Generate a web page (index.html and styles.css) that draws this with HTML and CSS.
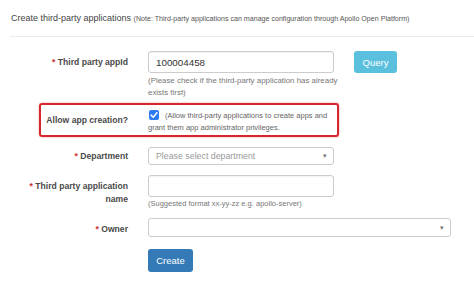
FILE: index.html
```html
<!DOCTYPE html>
<html>

<head>
    <meta charset="UTF-8">
    <title>Create third-party applications</title>
    <link rel="stylesheet" href="styles.css">
</head>

<body>
    <div class="panel">
        <div class="panel-header">
            Create third-party applications
            <small>(Note: Third-party applications can manage configuration through Apollo Open Platform)</small>
        </div>

        <form class="form">
            <div class="form-row row-appid">
                <label class="control-label"><span class="req">*</span> Third party appId</label>
                <div class="controls">
                    <div class="inline">
                        <input type="text" class="form-control" value="100004458">
                        <button type="button" class="btn btn-info">Query</button>
                    </div>
                    <div class="help">(Please check if the third-party application has already exists first)</div>
                </div>
            </div>

            <div class="form-row row-allow">
                <label class="control-label">Allow app creation?</label>
                <div class="controls">
                    <div class="check-text">
                        <span class="checkbox">
                            <svg width="10" height="10" viewBox="0 0 10 10">
                                <path d="M2.2 5.2 L4.2 7.2 L7.9 2.8" fill="none" stroke="#fff" stroke-width="1.6" stroke-linecap="round" stroke-linejoin="round"/>
                            </svg>
                        </span>(Allow third-party applications to create apps and grant them app administrator privileges.
                    </div>
                </div>
            </div>

            <div class="form-row row-dept">
                <label class="control-label"><span class="req">*</span> Department</label>
                <div class="controls">
                    <div class="select select-short">
                        <span class="placeholder">Please select department</span>
                        <span class="caret">&#9662;</span>
                    </div>
                </div>
            </div>

            <div class="form-row row-name">
                <label class="control-label"><span class="req">*</span> Third party application name</label>
                <div class="controls">
                    <input type="text" class="form-control">
                    <div class="help">(Suggested format xx-yy-zz e.g. apollo-server)</div>
                </div>
            </div>

            <div class="form-row row-owner">
                <label class="control-label"><span class="req">*</span> Owner</label>
                <div class="controls">
                    <div class="select select-long">
                        <span class="placeholder"></span>
                        <span class="caret">&#9662;</span>
                    </div>
                </div>
            </div>

            <div class="form-row row-submit">
                <div></div>
                <div class="controls">
                    <button type="button" class="btn btn-primary">Create</button>
                </div>
            </div>
        </form>
    </div>
</body>

</html>
```

FILE: styles.css
```css
/* Create third-party application form */
body {
    font-family: "Liberation Sans", Arial, sans-serif;
    margin: 0;
    padding: 0;
    background-color: #fff;
    color: #333;
}

.panel-header {
    margin-left: 10px;
    padding: 12px 0 11px 1px;
    font-size: 9px;
    line-height: 12px;
    color: #444;
    border-bottom: 1px solid #eaeaea;
    white-space: nowrap;
}

.panel-header small {
    font-size: 7.1px;
    color: #555;
}

.form {
    padding-top: 14px;
}

.form-row {
    display: grid;
    grid-template-columns: 108px 1fr;
    column-gap: 20px;
    padding-left: 20px;
    align-items: start;
}

.control-label {
    text-align: right;
    font-weight: bold;
    font-size: 8.6px;
    color: #4a4a4a;
}

.req {
    color: #c9302c;
}

.form-control {
    display: block;
    box-sizing: border-box;
    width: 186px;
    height: 22px;
    margin: 0;
    padding: 0 7px;
    border: 1px solid #ccc;
    border-radius: 3px;
    font-family: inherit;
    font-size: 9.8px;
    color: #333;
    box-shadow: inset 0 1px 1px rgba(0, 0, 0, 0.05);
}

.inline {
    display: flex;
    align-items: center;
}

.btn {
    border: none;
    border-radius: 3px;
    color: #fff;
    font-family: inherit;
    font-size: 9.5px;
    cursor: pointer;
}

.btn-info {
    background-color: #5bc0de;
    height: 22px;
    width: 43px;
    margin-left: 20px;
    padding: 0;
}

.btn-primary {
    background-color: #337ab7;
    height: 23px;
    width: 45px;
    padding: 0;
}

.help {
    width: 186px;
    font-size: 7.5px;
    line-height: 12px;
    color: #777;
}

/* appid row */
.row-appid .control-label {
    line-height: 22px;
}

.row-appid .help {
    width: 196px;
    margin-top: 2px;
    font-size: 7.9px;
}

/* allow row, marked with a red frame */
.row-allow {
    margin-top: 4px;
    margin-left: 39px;
    width: 300px;
    box-sizing: border-box;
    grid-template-columns: 87px 1fr;
    padding: 5px 0 1px 0;
    border: 2px solid #d9262e;
    border-radius: 3px;
    box-shadow: 0 0 2px rgba(200, 20, 30, 0.45);
}

.row-allow .control-label {
    line-height: 20px;
}

.check-text {
    width: 186px;
    font-size: 7.5px;
    line-height: 12px;
    color: #666;
}

.checkbox {
    display: inline-block;
    width: 10px;
    height: 10px;
    margin: 0 6px 0 1px;
    vertical-align: -2px;
    background-color: #2d7cf3;
    border-radius: 2px;
}

.checkbox svg {
    display: block;
}

/* selects */
.select {
    box-sizing: border-box;
    display: flex;
    align-items: center;
    justify-content: space-between;
    padding: 0 6px 0 7px;
    border: 1px solid #ccc;
    border-radius: 3px;
    font-size: 8.8px;
    background-color: #fff;
}

.select-short {
    width: 186px;
    height: 18px;
}

.select-long {
    width: 303px;
    height: 19px;
}

.placeholder {
    color: #999;
}

.caret {
    font-size: 7px;
    color: #777;
}

.row-dept {
    margin-top: 10px;
}

.row-dept .control-label {
    line-height: 18px;
}

/* name row */
.row-name {
    margin-top: 10px;
}

.row-name .control-label {
    padding-top: 5px;
    line-height: 13px;
}

.row-name .help {
    margin-top: 1px;
}

/* owner row */
.row-owner {
    margin-top: 8px;
}

.row-owner .control-label {
    padding-top: 2px;
    line-height: 19px;
}

.row-submit {
    margin-top: 10px;
}
```
